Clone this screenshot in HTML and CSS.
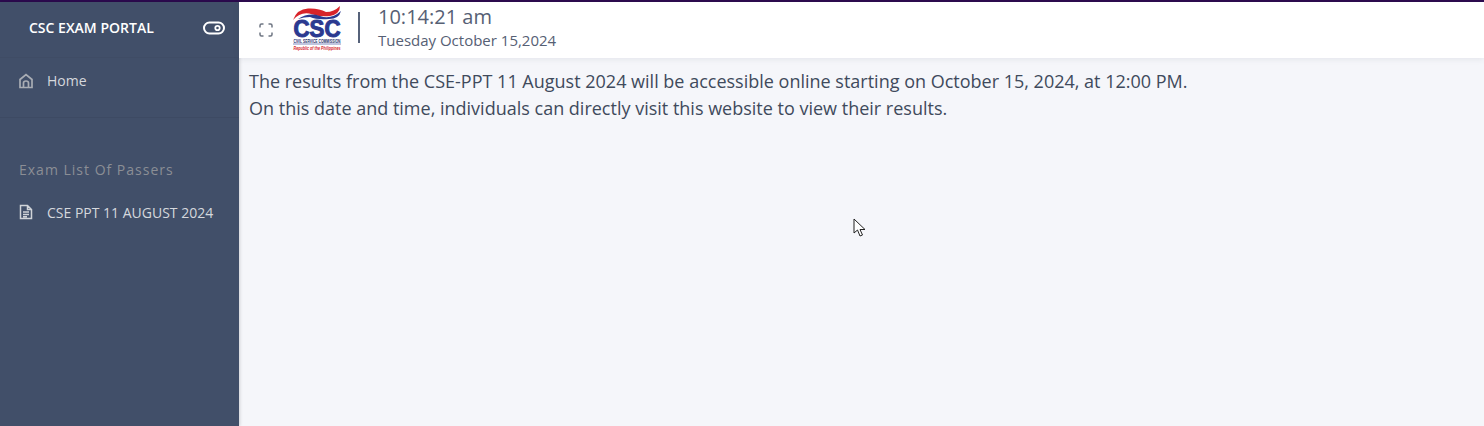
FILE: index.html
```html
<!DOCTYPE html>
<html lang="en">
<head>
    <meta charset="UTF-8">
    <title>CSC Exam Portal</title>
    <link rel="stylesheet" href="styles.css">
</head>
<body>
<div class="topline"></div>
<div class="page">
    <aside class="sidebar">
        <div class="brand">
            <span class="brand-name">CSC EXAM PORTAL</span>
            <svg class="toggle" width="22" height="14" viewBox="0 0 22 14">
                <rect x="1" y="1.500" width="20" height="11" rx="5.500" fill="none" stroke="#fff" stroke-width="2"/>
                <circle cx="14.500" cy="7" r="2.200" fill="none" stroke="#fff" stroke-width="1.800"/>
            </svg>
        </div>
        <div class="menu-top">
            <a class="menu-item">
                <svg class="menu-icon" width="16" height="16" viewBox="0 0 16 16">
                    <path d="M2 6.500 8 1.500 14 6.500V14.500H2Z M5.500 14.500V10Q5.500 8 8 8T10.500 10V14.500" fill="none" stroke="#a9adb4" stroke-width="1.700"/>
                </svg>
                <span>Home</span>
            </a>
        </div>
        <div class="menu-title">Exam List Of Passers</div>
        <a class="menu-item">
            <svg class="menu-icon" width="16" height="16" viewBox="0 0 16 16">
                <path d="M2.500 1.500H9.500L13.500 5.500V14.500H2.500Z M9.500 1.500V5.500H13.500 M5 8H11 M5 10.500H11 M5 12.800H9" fill="none" stroke="#d0d3d8" stroke-width="1.500"/>
            </svg>
            <span>CSE PPT 11 AUGUST 2024</span>
        </a>
    </aside>
    <div class="main">
        <header class="header">
            <svg class="expand" width="14" height="14" viewBox="0 0 14 14">
                <path d="M1 4.500V2.500Q1 1 2.500 1H4.500 M9.500 1H11.500Q13 1 13 2.500V4.500 M13 9.500V11.500Q13 13 11.500 13H9.500 M4.500 13H2.500Q1 13 1 11.500V9.500" fill="none" stroke="#6e7582" stroke-width="1.500"/>
            </svg>
            <svg class="logo" width="48" height="46" viewBox="0 0 48 46">
                <path d="M0 14Q4 3 15 2.500T33 6Q41 6 47 0Q47 8 37 10Q26 11 16 7.500Q7 6 0 14Z" fill="#d8232a"/>
                <path d="M5 13Q16 6 27 10T48 5Q46 13 36 13Q24 14 17 11Q11 11 5 13Z" fill="#2b3990"/>
                <text class="logo-big" x="0.500" y="31" textLength="47" lengthAdjust="spacingAndGlyphs">CSC</text>
                <text class="logo-small" x="0.500" y="36.800" textLength="47" lengthAdjust="spacingAndGlyphs">CIVIL SERVICE COMMISSION</text>
                <line x1="0" y1="38" x2="48" y2="38" stroke="#2b3990" stroke-width="0.600"/>
                <text class="logo-red" x="0.500" y="44" textLength="47" lengthAdjust="spacingAndGlyphs">Republic of the Philippines</text>
            </svg>
            <div class="divider"></div>
            <div class="clock">
                <div class="time">10:14:21 am</div>
                <div class="date">Tuesday October 15,2024</div>
            </div>
        </header>
        <main class="content">
            <p>The results from the CSE-PPT 11 August 2024 will be accessible online starting on October 15, 2024, at 12:00 PM.</p>
            <p>On this date and time, individuals can directly visit this website to view their results.</p>
        </main>
    </div>
</div>
<!-- mouse pointer caught in the screenshot -->
<svg class="cursor" width="14" height="20" viewBox="0 0 14 20">
    <path d="M1 1V15L4.500 12L7 18L9.500 17L7 11.500H12Z" fill="#fff" stroke="#222" stroke-width="1"/>
</svg>
</body>
</html>
```

FILE: styles.css
```css
* {
    margin: 0;
    padding: 0;
    box-sizing: border-box;
}

html, body {
    height: 100%;
    overflow: hidden;
}

body {
    position: relative;
    display: flex;
    flex-direction: column;
    font-family: "Open Sans", "Noto Sans", sans-serif;
    background: #f5f6fa;
    color: #3f4a5f;
}

.topline {
    height: 2px;
    background: #2c0a4f;
}

.page {
    flex: 1;
    display: flex;
    min-height: 0;
}

.sidebar {
    width: 239px;
    background: #414f69;
    color: #d5d8dd;
    font-size: 14px;
    box-shadow: 1px 0 3px rgba(0, 0, 0, 0.15);
}

.brand {
    height: 56px;
    display: flex;
    align-items: center;
    justify-content: space-between;
    padding: 0 14px 4px 29px;
    color: #fff;
    font-size: 14px;
    font-weight: 600;
    border-bottom: 1px solid #3f4c65;
}

.menu-top {
    height: 60px;
    border-bottom: 1px solid #3d4a63;
}

.menu-item {
    display: flex;
    align-items: center;
    height: 46px;
    padding-left: 18px;
    gap: 13px;
}

.menu-top .menu-item {
    height: 45px;
}

.menu-title {
    margin-top: 42px;
    padding-left: 19px;
    height: 20px;
    line-height: 20px;
    font-size: 14px;
    letter-spacing: 1px;
    color: #8b8e95;
}

.menu-title + .menu-item {
    margin-top: 9px;
}

.main {
    flex: 1;
    min-width: 0;
}

.header {
    height: 56px;
    display: flex;
    align-items: center;
    background: #fff;
    box-shadow: 0 1px 6px rgba(60, 70, 90, 0.1);
    padding-left: 20px;
}

.expand {
    margin-right: 20px;
}

.logo {
    margin: 0 17px 2px 0;
    overflow: visible;
}

.logo-big {
    font-family: "Liberation Sans", sans-serif;
    font-size: 23px;
    font-weight: 700;
    fill: #2b3990;
    stroke: #2b3990;
    stroke-width: 1;
}

.logo-small {
    font-family: "Liberation Sans", sans-serif;
    font-size: 6px;
    font-weight: 700;
    fill: #26306e;
}

.logo-red {
    font-family: "Liberation Sans", sans-serif;
    font-size: 5.5px;
    font-weight: 700;
    font-style: italic;
    fill: #d8232a;
}

.divider {
    width: 2px;
    height: 31px;
    background: #56627a;
    margin: 0 18px 5px 0;
}

.clock {
    color: #566074;
    margin-bottom: 6px;
}

.time {
    font-size: 20px;
    line-height: 26px;
}

.date {
    font-size: 15px;
    line-height: 20px;
}

.content {
    padding: 10px;
    font-size: 18px;
    line-height: 27px;
    color: #404a5c;
}

.cursor {
    position: absolute;
    left: 853px;
    top: 218px;
}
```
